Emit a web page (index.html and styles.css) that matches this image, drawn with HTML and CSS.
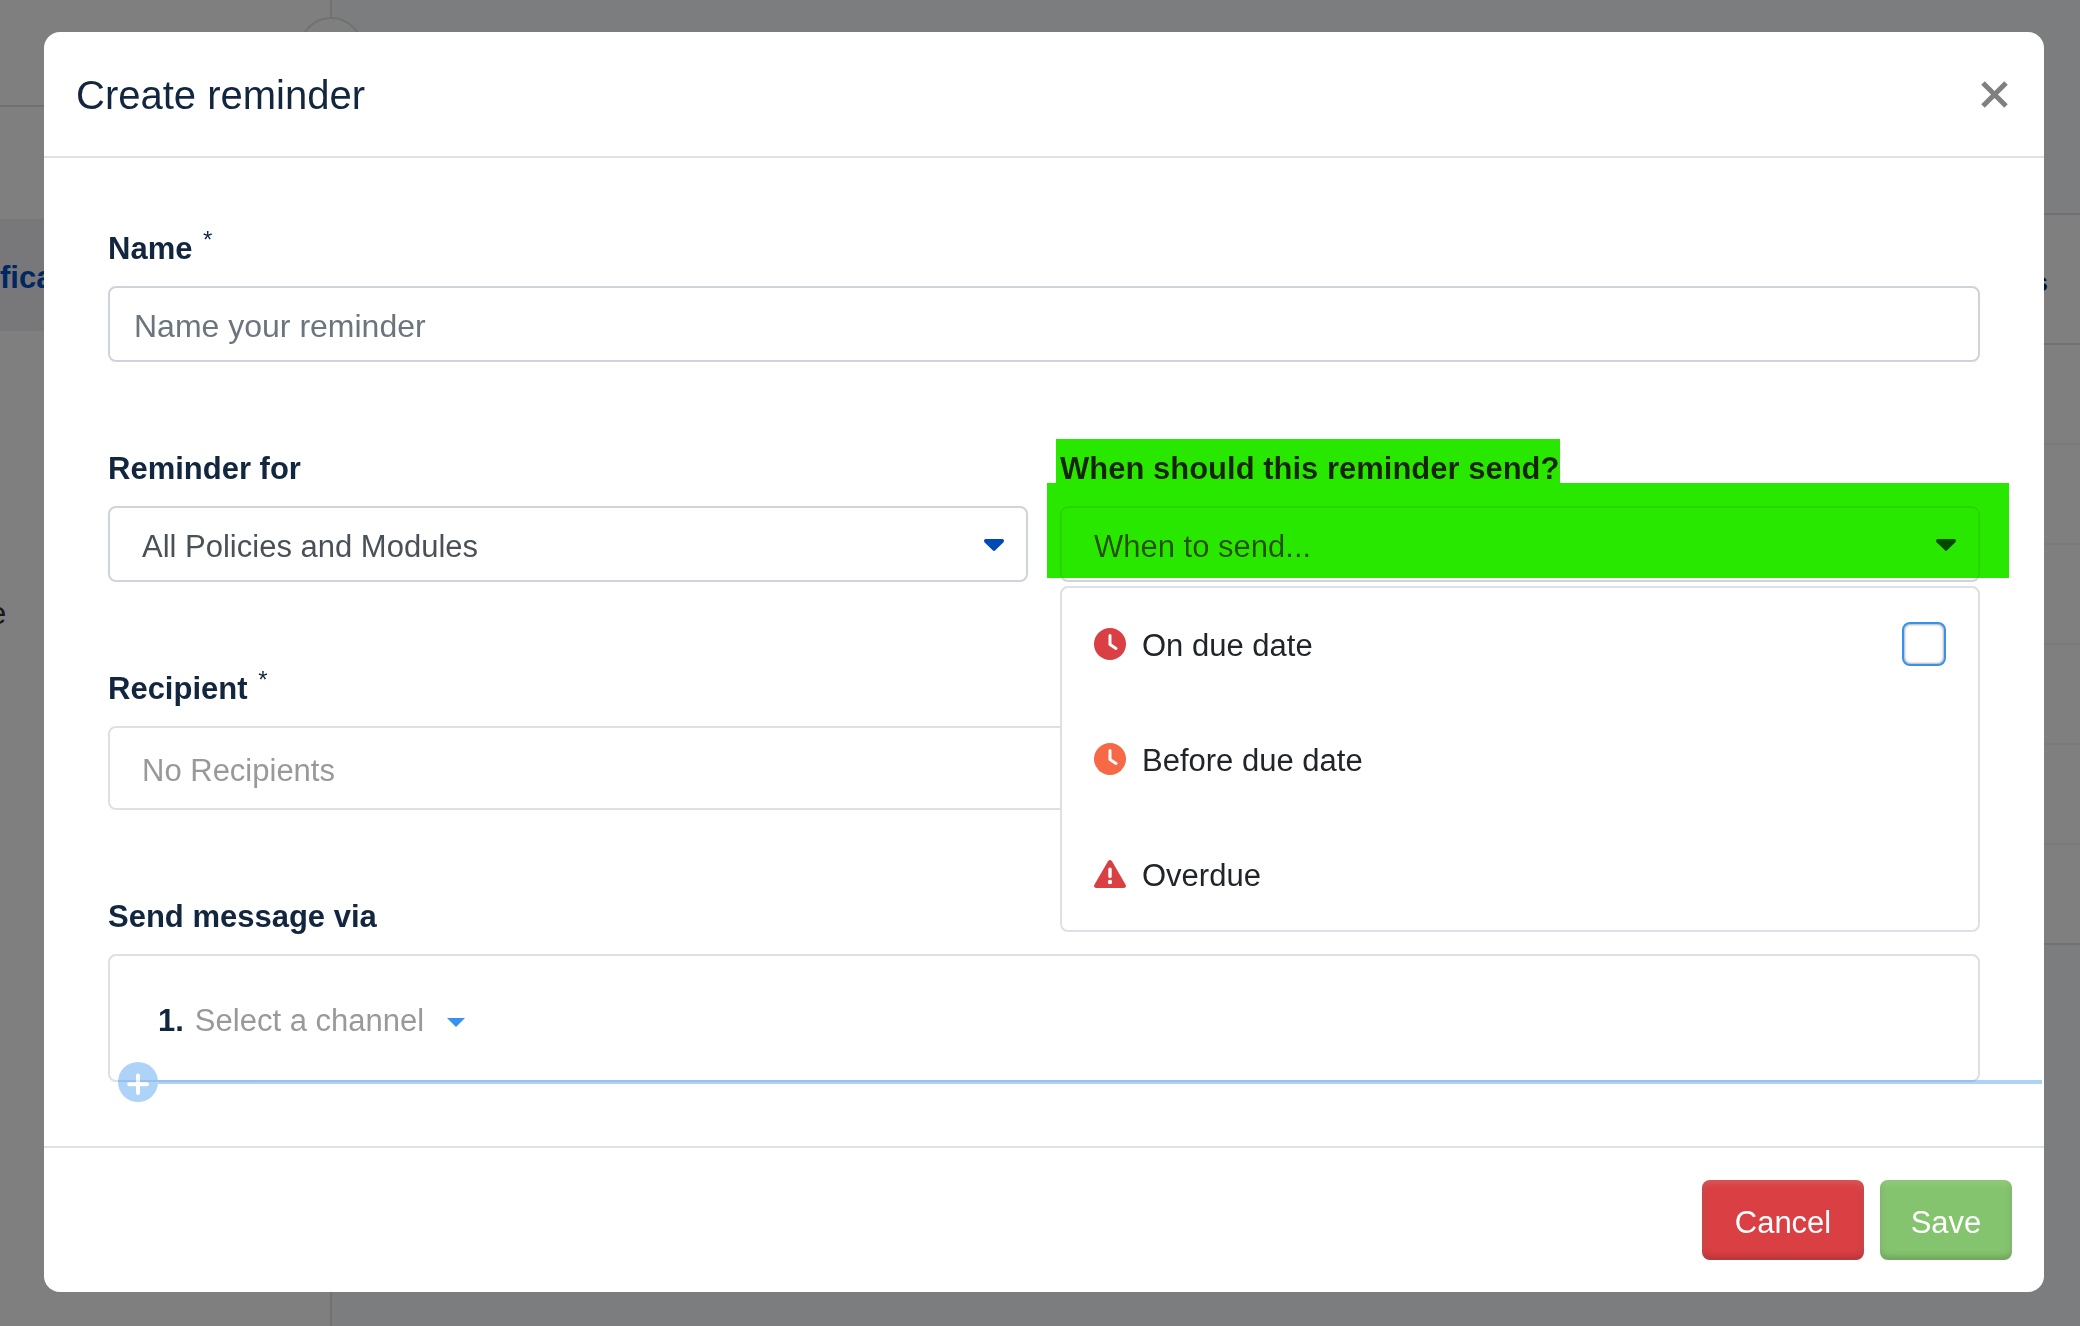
FILE: index.html
```html
<!DOCTYPE html>
<html lang="en">
<head>
<meta charset="utf-8">
<meta name="viewport" content="width=device-width, initial-scale=1">
<title>Create reminder</title>
<link rel="stylesheet" href="styles.css">
</head>
<body>
<div class="page">
  <aside class="sidebar">
    <button class="collapse" type="button"></button>
    <div class="brand"></div>
    <nav class="nav">
      <a class="nav-item active" href="#">fica</a>
      <a class="nav-item cut" href="#">e</a>
    </nav>
  </aside>
  <main class="main">
    <table class="card">
      <thead><tr><th>s</th></tr></thead>
      <tbody>
        <tr><td></td></tr><tr><td></td></tr><tr><td></td></tr>
        <tr><td></td></tr><tr><td></td></tr><tr><td></td></tr>
      </tbody>
    </table>
  </main>
</div>

<div class="backdrop">
  <form class="modal" role="dialog" aria-labelledby="title">
    <header class="modal-header">
      <h1 id="title">Create reminder</h1>
      <button class="close" type="button" aria-label="Close">
        <svg width="27" height="27" viewBox="0 0 27 27"><path d="M2 2 25 25M25 2 2 25" stroke="#808080" stroke-width="5"/></svg>
      </button>
    </header>

    <div class="modal-body">
      <div class="field">
        <label for="name">Name <sup>*</sup></label>
        <input class="control name" id="name" type="text" placeholder="Name your reminder">
      </div>

      <div class="columns">
        <div class="field">
          <label for="for">Reminder for</label>
          <div class="select">
            <select class="control" id="for"><option>All Policies and Modules</option></select>
            <svg width="20" height="12" viewBox="0 0 20 12"><path d="M1.600 0H18.400Q20 .2 20 1.800 20 2.700 19.300 3.400L11.300 11.300Q10 12.500 8.700 11.300L.7 3.400Q0 2.700 0 1.800 0 .2 1.600 0Z" fill="#004ab5"/></svg>
          </div>
        </div>
        <div class="field marked">
          <label for="when">When should this reminder send?</label>
          <div class="select">
            <select class="control" id="when"><option>When to send...</option></select>
            <svg width="20" height="12" viewBox="0 0 20 12"><path d="M1.600 0H18.400Q20 .2 20 1.800 20 2.700 19.300 3.400L11.300 11.300Q10 12.500 8.700 11.300L.7 3.400Q0 2.700 0 1.800 0 .2 1.600 0Z" fill="#004ab5"/></svg>
          </div>
          <ul class="menu">
            <li>
              <svg width="32" height="32" viewBox="0 0 32 32"><circle cx="16" cy="16" r="16" fill="#d93f43"/><path d="M16 7.500V16.500L22 20.500" fill="none" stroke="#fff" stroke-width="3" stroke-linecap="round" stroke-linejoin="round"/></svg>
              <label for="on-due">On due date</label>
              <input id="on-due" type="checkbox">
            </li>
            <li>
              <svg width="32" height="32" viewBox="0 0 32 32"><circle cx="16" cy="16" r="16" fill="#f76847"/><path d="M16 7.500V16.500L22 20.500" fill="none" stroke="#fff" stroke-width="3" stroke-linecap="round" stroke-linejoin="round"/></svg>
              <span>Before due date</span>
            </li>
            <li>
              <svg width="32" height="28" viewBox="0 0 32 28"><path d="M14 1.300Q16-1.200 18 1.300L31.500 24.600Q32.800 27.600 29.700 28H2.300Q-.8 27.600.5 24.600Z" fill="#d93f43"/><path d="M16 9.300V16.500" stroke="#fff" stroke-width="3.400" stroke-linecap="round"/><circle cx="16" cy="22" r="2.200" fill="#fff"/></svg>
              <span>Overdue</span>
            </li>
          </ul>
        </div>
      </div>

      <div class="field">
        <label for="recipient">Recipient <sup>*</sup></label>
        <input class="control recipient" id="recipient" type="text" placeholder="No Recipients">
      </div>

      <div class="field">
        <label for="channel">Send message via</label>
        <div class="channels">
          <b>1.</b>
          <select class="channel" id="channel"><option>Select a channel</option></select>
          <svg width="18" height="12" viewBox="0 0 18 12"><path d="M0 3H18L9 12Z" fill="#3592ee"/></svg>
          <div class="add-step">
            <button type="button" aria-label="Add channel">
              <svg width="40" height="40" viewBox="0 0 40 40"><path d="M20 13.500V31M11.200 22.300H29" stroke="#fff" stroke-width="4" stroke-linecap="round"/></svg>
            </button>
          </div>
        </div>
      </div>
    </div>

    <footer class="modal-footer">
      <button class="btn cancel" type="button">Cancel</button>
      <button class="btn save" type="submit">Save</button>
    </footer>
  </form>
</div>
</body>
</html>
```

FILE: styles.css
```css
* {
  box-sizing: border-box;
}

body {
  margin: 0;
  font: 31px/50px "Liberation Sans", Arial, sans-serif;
  color: #212529;
}

button,
input,
select {
  font: inherit;
}

button {
  padding: 0;
  border: 0;
  background: none;
  cursor: pointer;
}

svg {
  display: block;
  flex: none;
}

/* Page behind the dialog */
.page {
  display: flex;
  min-height: 100vh;
  overflow: hidden;
  background: #f9fafc;
}

.sidebar {
  position: relative;
  flex: none;
  width: 332px;
  background: #fff;
  border-right: 2px solid #dee2e6;
}

.collapse {
  position: absolute;
  top: 17px;
  right: -33px;
  width: 64px;
  height: 64px;
  background: #fff;
  border: 2px solid #dee2e6;
  border-radius: 50%;
}

.brand {
  height: 107px;
  border-bottom: 2px solid #dfe0e8;
}

.nav {
  padding-top: 112px;
}

.nav-item {
  display: flex;
  align-items: center;
  height: 112px;
  padding-top: 6px;
  color: #333;
  text-decoration: none;
}

.nav-item.active {
  background: #f0f1f7;
  color: #004ec2;
  font-weight: bold;
}

.nav-item.cut {
  margin: 224px 0 0 -11px;
}

.main {
  flex: 1;
  padding: 213px 0 0 48px;
}

.card {
  width: 100%;
  background: #fff;
  border-spacing: 0;
  border-top: 2px solid #dfdfe8;
}

.card th {
  height: 130px;
  padding: 6px 32px 0 0;
  border-bottom: 2px solid #dfdfe8;
  color: #13263f;
  font-size: 26px;
  text-align: right;
}

.card td {
  height: 100px;
  padding: 0;
  border-bottom: 2px solid #f4f4f4;
}

.card tr:last-child td {
  border-bottom-color: #dee2e6;
}

/* Dialog */
.backdrop {
  position: fixed;
  inset: 0;
  overflow: auto;
  padding: 32px 36px 34px 44px;
  background: rgba(0, 0, 0, 0.5);
}

.modal {
  background: #fff;
  border-radius: 16px;
  isolation: isolate;
}

.modal-header {
  display: flex;
  align-items: center;
  justify-content: space-between;
  padding: 36px 36px 36px 32px;
  border-bottom: 2px solid #dee2e6;
}

h1 {
  margin: 0;
  padding-top: 2px;
  color: #13263f;
  font-size: 40px;
  font-weight: normal;
  line-height: 50px;
}

.modal-body {
  display: flex;
  flex-direction: column;
  gap: 82px;
  padding: 66px 64px 64px;
}

.columns {
  display: grid;
  grid-template-columns: 1fr 1fr;
  gap: 32px;
}

.field {
  position: relative;
}

.field > label {
  display: block;
  margin-bottom: 12px;
  color: #13263f;
  font-weight: bold;
}

sup {
  margin-left: 2px;
  font-size: 24px;
  font-weight: normal;
  line-height: 0;
}

.control {
  display: block;
  width: 100%;
  height: 76px;
  padding: 5px 32px 0;
  appearance: none;
  background: #fff;
  border: 2px solid #ced4da;
  border-radius: 8px;
  color: #495057;
}

.control.name {
  padding: 5px 24px 0;
  font-size: 32px;
}

.name::placeholder {
  color: #6c757d;
  opacity: 1;
}

.control.recipient {
  height: 84px;
  border-color: #dfdfe6;
}

.recipient::placeholder {
  color: #999;
  opacity: 1;
}

.select {
  display: grid;
  align-items: center;
}

.select > * {
  grid-area: 1 / 1;
}

.select svg {
  justify-self: end;
  margin: 2px 24px 0 0;
  pointer-events: none;
}

/* Highlighter marks over the label and over its drop-down */
.marked::before,
.marked::after {
  content: "";
  position: absolute;
  background: #28e800;
  mix-blend-mode: darken;
  pointer-events: none;
}

.marked::before {
  top: -5px;
  left: -4px;
  z-index: 1;
  width: 504px;
  height: 44px;
}

.marked::after {
  top: 39px;
  right: -29px;
  bottom: 4px;
  left: -13px;
}

.menu {
  position: absolute;
  top: 100%;
  left: 0;
  right: 0;
  z-index: 2;
  display: grid;
  gap: 63px;
  margin: 4px 0 0;
  padding: 32px 32px 28px;
  list-style: none;
  background: #fff;
  border: 2px solid #dfdfe6;
  border-radius: 8px;
}

.menu li {
  display: flex;
  align-items: center;
  gap: 16px;
  height: 52px;
}

.menu svg,
.menu input {
  margin: 0 0 4px;
}

.menu input {
  width: 44px;
  height: 44px;
  margin-left: auto;
  appearance: none;
  border: 2px solid #3592ee;
  border-radius: 8px;
  box-shadow: inset 0 0 3px rgba(0, 0, 0, 0.6);
}

.channels {
  position: relative;
  display: flex;
  align-items: center;
  height: 128px;
  padding: 5px 48px 0;
  border: 2px solid #dfdfe6;
  border-radius: 8px;
}

.channels b {
  margin-right: 11px;
  color: #13263f;
}

.channel {
  margin-right: 22px;
  padding: 0;
  appearance: none;
  background: none;
  border: 0;
  color: #999;
}

.add-step {
  position: absolute;
  right: -64px;
  bottom: -22px;
  left: 8px;
  display: flex;
  align-items: center;
  opacity: 0.4;
}

.add-step button {
  flex: none;
  background: #3592ee;
  border-radius: 50%;
}

.add-step::after {
  content: "";
  flex: 1;
  height: 4px;
  background: #3592ee;
}

.modal-footer {
  display: flex;
  justify-content: flex-end;
  gap: 16px;
  padding: 32px;
  border-top: 2px solid #dee2e6;
}

.btn {
  min-width: 132px;
  height: 80px;
  padding-top: 5px;
  border-radius: 8px;
  color: #fff;
  box-shadow: inset 0 3px 6px rgba(255, 255, 255, 0.15), inset 0 -3px 6px rgba(0, 0, 0, 0.2);
}

.cancel {
  min-width: 162px;
  background: #d93f43;
}

.save {
  background: #85c46e;
}
```
